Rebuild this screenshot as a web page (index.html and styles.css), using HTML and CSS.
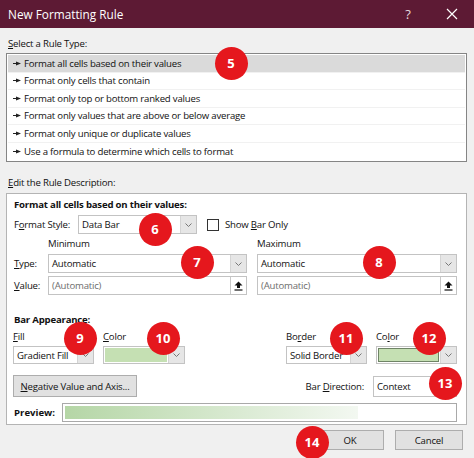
FILE: index.html
```html
<!DOCTYPE html>
<html>
<head>
<meta charset="utf-8">
<link rel="stylesheet" href="styles.css">
</head>
<body>
<div class="dialog">
  <div class="titlebar">
    <span class="title">New Formatting Rule</span>
    <span class="help">?</span>
    <span class="close"><svg width="12" height="12" viewBox="0 0 12 12"><path d="M1 1L11 11M11 1L1 11" stroke="#fff" stroke-width="1.2" fill="none"/></svg></span>
  </div>
  <div class="content">
    <div class="label first"><u>S</u>elect a Rule Type:</div>
    <div class="listbox">
      <div class="item selected"><svg class="arr" width="8" height="5" viewBox="0 0 8 5"><path d="M0 2.5H4" stroke="#222" stroke-width="1"/><path d="M3 0.5L8 2.5L3 4.5Z" fill="#222"/></svg>Format all cells based on their values</div>
      <div class="item"><svg class="arr" width="8" height="5" viewBox="0 0 8 5"><path d="M0 2.5H4" stroke="#222" stroke-width="1"/><path d="M3 0.5L8 2.5L3 4.5Z" fill="#222"/></svg>Format only cells that contain</div>
      <div class="item"><svg class="arr" width="8" height="5" viewBox="0 0 8 5"><path d="M0 2.5H4" stroke="#222" stroke-width="1"/><path d="M3 0.5L8 2.5L3 4.5Z" fill="#222"/></svg>Format only top or bottom ranked values</div>
      <div class="item"><svg class="arr" width="8" height="5" viewBox="0 0 8 5"><path d="M0 2.5H4" stroke="#222" stroke-width="1"/><path d="M3 0.5L8 2.5L3 4.5Z" fill="#222"/></svg>Format only values that are above or below average</div>
      <div class="item"><svg class="arr" width="8" height="5" viewBox="0 0 8 5"><path d="M0 2.5H4" stroke="#222" stroke-width="1"/><path d="M3 0.5L8 2.5L3 4.5Z" fill="#222"/></svg>Format only unique or duplicate values</div>
      <div class="item last"><svg class="arr" width="8" height="5" viewBox="0 0 8 5"><path d="M0 2.5H4" stroke="#222" stroke-width="1"/><path d="M3 0.5L8 2.5L3 4.5Z" fill="#222"/></svg>Use a formula to determine which cells to format</div>
    </div>
    <div class="label second"><u>E</u>dit the Rule Description:</div>
    <div class="panel">
      <div class="heading">Format all cells based on their values:</div>
      <div class="style-row">
        <span class="style-label">F<u>o</u>rmat Style:</span>
        <div class="combo style-combo"><span class="val">Data Bar</span><span class="drop"><svg width="7" height="4" viewBox="0 0 7 4"><path d="M0.5 0.5L3.5 3.5L6.5 0.5" stroke="#777" fill="none"/></svg></span></div>
        <span class="checkbox"></span>
        <span class="check-label">Show <u>B</u>ar Only</span>
      </div>
      <div class="minmax">
        <span></span><span class="colhead">Minimum</span><span></span><span class="colhead">Maximum</span>
        <span class="rowlabel"><u>T</u>ype:</span>
        <div class="combo"><span class="val">Automatic</span><span class="drop"><svg width="7" height="4" viewBox="0 0 7 4"><path d="M0.5 0.5L3.5 3.5L6.5 0.5" stroke="#777" fill="none"/></svg></span></div>
        <span></span>
        <div class="combo"><span class="val">Automatic</span><span class="drop"><svg width="7" height="4" viewBox="0 0 7 4"><path d="M0.5 0.5L3.5 3.5L6.5 0.5" stroke="#777" fill="none"/></svg></span></div>
        <span class="rowlabel"><u>V</u>alue:</span>
        <div class="input"><span class="val dim">(Automatic)</span><span class="upbtn"><svg width="9" height="10" viewBox="0 0 9 10"><path d="M4.5 0.5L8.5 4.5H6V7H3V4.5H0.5Z" fill="#111"/><path d="M0.5 9H8.5" stroke="#111" stroke-width="1.2"/></svg></span></div>
        <span></span>
        <div class="input"><span class="val dim">(Automatic)</span><span class="upbtn"><svg width="9" height="10" viewBox="0 0 9 10"><path d="M4.5 0.5L8.5 4.5H6V7H3V4.5H0.5Z" fill="#111"/><path d="M0.5 9H8.5" stroke="#111" stroke-width="1.2"/></svg></span></div>
      </div>
      <div class="heading bar-heading">Bar Appearance:</div>
      <div class="appearance">
        <span class="alabel"><u>F</u>ill</span>
        <span class="alabel"><u>C</u>olor</span>
        <span></span>
        <span class="alabel">Bo<u>r</u>der</span>
        <span class="alabel">Co<u>l</u>or</span>
        <div class="combo small"><span class="val">Gradient Fill</span><span class="drop"><svg width="7" height="4" viewBox="0 0 7 4"><path d="M0.5 0.5L3.5 3.5L6.5 0.5" stroke="#777" fill="none"/></svg></span></div>
        <div class="combo small color"><span class="swatch"></span><span class="drop"><svg width="7" height="4" viewBox="0 0 7 4"><path d="M0.5 0.5L3.5 3.5L6.5 0.5" stroke="#777" fill="none"/></svg></span></div>
        <span></span>
        <div class="combo small"><span class="val">Solid Border</span><span class="drop"><svg width="7" height="4" viewBox="0 0 7 4"><path d="M0.5 0.5L3.5 3.5L6.5 0.5" stroke="#777" fill="none"/></svg></span></div>
        <div class="combo small color"><span class="swatch outlined"></span><span class="drop"><svg width="7" height="4" viewBox="0 0 7 4"><path d="M0.5 0.5L3.5 3.5L6.5 0.5" stroke="#777" fill="none"/></svg></span></div>
      </div>
      <div class="axis-row">
        <button class="btn axis"><u>N</u>egative Value and Axis...</button>
        <span class="dir-label">Bar <u>D</u>irection:</span>
        <div class="combo dir"><span class="val">Context</span><span class="drop"><svg width="7" height="4" viewBox="0 0 7 4"><path d="M0.5 0.5L3.5 3.5L6.5 0.5" stroke="#777" fill="none"/></svg></span></div>
      </div>
      <div class="preview-row">
        <span class="preview-label">Preview:</span>
        <div class="preview"><div class="bar"></div></div>
      </div>
    </div>
    <div class="footer">
      <button class="btn dlg">OK</button>
      <button class="btn dlg">Cancel</button>
    </div>
  </div>
  <span class="badge b5">5</span>
  <span class="badge b6">6</span>
  <span class="badge b7">7</span>
  <span class="badge b8">8</span>
  <span class="badge b9">9</span>
  <span class="badge b10">10</span>
  <span class="badge b11">11</span>
  <span class="badge b12">12</span>
  <span class="badge b13">13</span>
  <span class="badge b14">14</span>
</div>
</body>
</html>
```
FILE: styles.css
```css
* { box-sizing: border-box; }
html, body { margin: 0; padding: 0; }
body {
  width: 474px;
  height: 458px;
  overflow: hidden;
  background: #f0f0f0;
  font-family: "Open Sans", "Noto Sans", sans-serif;
  font-size: 9.6px;
  letter-spacing: -0.2px;
  color: #111;
}
.dialog { position: relative; width: 474px; height: 458px; }
u { text-decoration: underline; text-underline-offset: 1px; }

.titlebar {
  height: 28px;
  background: #5d1a34;
  color: #fff;
  display: flex;
  align-items: center;
  padding-left: 8px;
}
.title { font-size: 11.8px; letter-spacing: 0; flex: 1; }
.help {
  font-size: 13px;
  letter-spacing: 0;
  width: 12px;
  text-align: center;
  color: #e6dade;
  flex: none;
}
.close {
  flex: none;
  width: 12px;
  height: 12px;
  margin-left: 32px;
  margin-right: 16px;
  display: block;
}
.close svg { display: block; }

.content { padding: 0 7px 0 6px; }
.label { height: 14px; line-height: 14px; padding-left: 2px; }
.label.first { margin-top: 9px; }
.label.second { margin-top: 14px; }

.listbox {
  margin-top: 2px;
  height: 109px;
  border: 1px solid #858585;
  background: #fff;
  padding: 1px;
}
.item {
  height: 17.5px;
  display: flex;
  align-items: center;
  padding-left: 5px;
  border-bottom: 1px solid #f1f1f1;
}
.item.last { border-bottom: none; }
.item.selected { background: #dadada; }
.arr { margin-right: 3px; flex: none; }

.panel {
  margin-top: 3px;
  height: 232px;
  border: 1px solid #b4b4b4;
  background: #fff;
  padding: 4px 9px 0 7px;
}
.heading { font-weight: 700; height: 14px; line-height: 14px; letter-spacing: -0.2px; }

.style-row {
  margin-top: 3px;
  height: 19px;
  display: flex;
  align-items: center;
}
.style-label { width: 64px; }
.combo {
  display: flex;
  height: 19px;
  border: 1px solid #c3c3c3;
  background: #fff;
  align-items: stretch;
}
.combo .val { flex: 1; padding-left: 3px; display: flex; align-items: center; white-space: nowrap; overflow: hidden; }
.combo .drop {
  width: 16px;
  flex: none;
  background: #e6e6e6;
  border-left: 1px solid #d4d4d4;
  display: flex;
  align-items: center;
  justify-content: center;
}
.style-combo { width: 119px; height: 19px; }
.checkbox {
  width: 12px; height: 12px;
  border: 1px solid #333;
  margin-left: 10px;
  background: #fff;
}
.check-label { margin-left: 6px; }

.minmax {
  display: grid;
  grid-template-columns: 34px 199px 10px 200px;
  grid-template-rows: 14px 19px 19px;
  row-gap: 3px;
  margin-top: 3px;
}
.colhead { line-height: 14px; }
.rowlabel { display: flex; align-items: center; }
.input {
  display: flex;
  border: 1px solid #c3c3c3;
  background: #fff;
}
.input .val { flex: 1; padding-left: 3px; display: flex; align-items: center; }
.dim { color: #6d6d6d; }
.upbtn {
  width: 16px;
  border-left: 1px solid #c8c8c8;
  display: flex; align-items: center; justify-content: center;
  background: #fff;
}

.bar-heading { margin-top: 18px; }
.appearance {
  display: grid;
  grid-template-columns: 81px 82px 1fr 82px 81px;
  column-gap: 9px;
  grid-template-rows: 14px 18px;
  row-gap: 2px;
  margin-top: 3px;
  margin-left: -1px;
}
.appearance > :nth-child(4), .appearance > :nth-child(9) { margin-left: 1px; }
.alabel { line-height: 14px; }
.combo.small { height: 18px; }
.swatch { flex: 1; background: #c5e0b3; margin: 1px; }
.swatch.outlined { border: 1px solid #6f8466; }

.axis-row {
  margin-top: 11px;
  display: flex;
  align-items: center;
  height: 22px;
}
.btn {
  font-family: inherit;
  font-size: 9.6px;
  letter-spacing: -0.2px;
  color: #111;
  background: #e1e1e1;
  border: 1px solid #adadad;
  padding: 0;
}
.btn.axis { width: 124px; height: 22px; margin-left: -1px; }
.dir-label { margin-left: auto; margin-right: 9px; }
.combo.dir { width: 84px; height: 21px; }
.combo.dir .drop { background: #fff; border-left: none; }

.preview-row {
  margin-top: 6px;
  display: flex;
  align-items: center;
  height: 19px;
}
.preview-label { font-weight: 700; width: 48px; letter-spacing: 0; }
.preview {
  flex: 1;
  height: 19px;
  border: 1px solid #a9a9a9;
  padding: 2px;
  background: #fff;
}
.preview .bar {
  width: 293px;
  height: 100%;
  background: linear-gradient(to right, #b5d6a6, #f3f8f1);
}

.footer {
  display: flex;
  justify-content: flex-end;
  gap: 11px;
  margin-top: 5px;
  padding-right: 4px;
}
.btn.dlg { width: 68px; height: 20px; }

.badge {
  position: absolute;
  width: 33px; height: 33px;
  margin: -16.5px 0 0 -16.5px;
  border-radius: 50%;
  background: #e5171d;
  color: #fff;
  font-weight: 700;
  font-size: 13px;
  letter-spacing: 0;
  font-family: "Open Sans", sans-serif;
  display: flex; align-items: center; justify-content: center;
}
.b5 { left: 231px; top: 63px; }
.b6 { left: 155px; top: 229px; }
.b7 { left: 197px; top: 262px; }
.b8 { left: 379px; top: 262px; }
.b9 { left: 80px; top: 338px; }
.b10 { left: 163px; top: 338px; }
.b11 { left: 346px; top: 338px; }
.b12 { left: 429px; top: 338px; }
.b13 { left: 445px; top: 383px; }
.b14 { left: 312px; top: 442px; }
```
